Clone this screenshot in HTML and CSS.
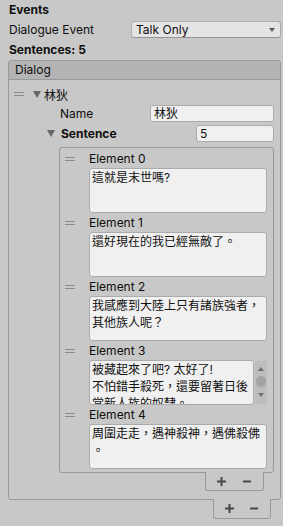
FILE: index.html
```html
<!DOCTYPE html>
<html lang="zh-Hant">
<head>
    <meta charset="UTF-8">
    <meta name="viewport" content="width=device-width, initial-scale=1.0">
    <title>Dialogue Inspector</title>
    <link rel="stylesheet" href="styles.css">
</head>
<body>

<!-- Events -->
<div class="title">Events</div>
<div class="event-row">
    <span class="event-label">Dialogue Event</span>
    <div class="dropdown">
        <span>Talk Only</span>
        <span class="caret"></span>
    </div>
</div>
<div class="title count">Sentences: 5</div>

<!-- Dialog list -->
<div class="box">
    <div class="box-head">Dialog</div>
    <div class="box-body">
        <div class="item-head">
            <span class="handle"></span>
            <span class="tri"></span>
            <span class="item-name">林狄</span>
        </div>

        <div class="prop name-row">
            <span class="prop-label">Name</span>
            <div class="field">林狄</div>
        </div>

        <div class="prop size-row">
            <span class="tri"></span>
            <span class="prop-label bold">Sentence</span>
            <div class="field size">5</div>
        </div>

        <div class="list">
            <div class="element">
                <div class="el-head"><span class="handle"></span><span>Element 0</span></div>
                <div class="text">這就是末世嗎?</div>
            </div>
            <div class="element">
                <div class="el-head"><span class="handle"></span><span>Element 1</span></div>
                <div class="text">還好現在的我已經無敵了。</div>
            </div>
            <div class="element">
                <div class="el-head"><span class="handle"></span><span>Element 2</span></div>
                <div class="text">我感應到大陸上只有諸族強者，<br>其他族人呢？</div>
            </div>
            <div class="element">
                <div class="el-head"><span class="handle"></span><span>Element 3</span></div>
                <div class="text-wrap">
                    <div class="text">被藏起來了吧? 太好了!<br>不怕錯手殺死，還要留著日後<br>當新人族的奴隸。</div>
                    <div class="scrollbar">
                        <span class="arrow up"></span>
                        <span class="thumb"></span>
                        <span class="arrow down"></span>
                    </div>
                </div>
            </div>
            <div class="element">
                <div class="el-head"><span class="handle"></span><span>Element 4</span></div>
                <div class="text">周圍走走，遇神殺神，遇佛殺佛<br>。</div>
            </div>
        </div>

        <div class="tab inner-tab">
            <span class="tab-btn">
                <svg width="9" height="9" viewBox="0 0 9 9"><path d="M4.5 0v9M0 4.5h9" stroke="#484848" stroke-width="2"/></svg>
            </span>
            <span class="tab-btn">
                <svg width="8" height="9" viewBox="0 0 8 9"><path d="M0 4.5h8" stroke="#484848" stroke-width="2"/></svg>
            </span>
        </div>
    </div>
</div>

<div class="tab outer-tab">
    <span class="tab-btn">
        <svg width="9" height="9" viewBox="0 0 9 9"><path d="M4.5 0v9M0 4.5h9" stroke="#484848" stroke-width="2"/></svg>
    </span>
    <span class="tab-btn">
        <svg width="8" height="9" viewBox="0 0 8 9"><path d="M0 4.5h8" stroke="#484848" stroke-width="2"/></svg>
    </span>
</div>

</body>
</html>
```

FILE: styles.css
```css
/* ===== Page ===== */
body {
    margin: 0;
    width: 283px;
    height: 526px;
    overflow: hidden;
    background: #c8c8c8;
    font-family: "Inter", "Noto Sans CJK TC", sans-serif;
    font-size: 12px;
    color: #0f0f0f;
}

/* ===== Events header ===== */
.title {
    padding-left: 9px;
    font-weight: bold;
    line-height: 20px;
}

.title.count {
    margin-top: 2px;
}

.event-row {
    display: flex;
    align-items: center;
    height: 17px;
    margin-top: 1px;
    padding: 0 2px 0 9px;
}

.event-label {
    width: 122px;
}

.dropdown {
    flex: 1;
    display: flex;
    align-items: center;
    justify-content: space-between;
    box-sizing: border-box;
    height: 17px;
    padding: 0 5px 0 4px;
    background: #e4e4e4;
    border: 1px solid #acacac;
    border-bottom-color: #949494;
    border-radius: 3px;
}

.caret {
    width: 0;
    height: 0;
    border-left: 3px solid transparent;
    border-right: 3px solid transparent;
    border-top: 4px solid #5a5a5a;
}

/* ===== Dialog box ===== */
.box {
    margin: 0 2px 0 8px;
    border: 1px solid #999;
    border-radius: 3px;
}

.box-head {
    height: 18px;
    line-height: 18px;
    padding-left: 6px;
    background: #b4b4b4;
    border-bottom: 1px solid #999;
    border-radius: 2px 2px 0 0;
}

.box-body {
    display: flex;
    flex-direction: column;
    padding: 5px 6px 8px 5px;
}

.handle {
    flex: none;
    width: 10px;
    height: 2px;
    border-top: 1px solid #8c8c8c;
    border-bottom: 1px solid #8c8c8c;
}

.tri {
    flex: none;
    width: 0;
    height: 0;
    border-left: 4px solid transparent;
    border-right: 4px solid transparent;
    border-top: 7px solid #666;
}

.item-head {
    display: flex;
    align-items: center;
    height: 18px;
}

.item-head .tri {
    margin-left: 9px;
}

.item-name {
    margin-left: 3px;
}

/* ===== Properties ===== */
.prop {
    display: flex;
    align-items: center;
    height: 17px;
}

.name-row {
    margin-top: 2px;
    padding-left: 46px;
}

.name-row .prop-label {
    width: 90px;
}

.size-row {
    margin-top: 3px;
    padding-left: 33px;
}

.size-row .prop-label {
    margin-left: 6px;
    flex: 1;
}

.bold {
    font-weight: bold;
}

.field {
    flex: none;
    box-sizing: border-box;
    width: 124px;
    height: 17px;
    line-height: 15px;
    padding: 0 3px;
    background: #f0f0f0;
    border: 1px solid #ababab;
    border-radius: 3px;
}

.field.size {
    width: 78px;
}

/* ===== Sentence list ===== */
.list {
    margin: 5px 0 0 45px;
    padding: 1px 6px 3px 5px;
    border: 1px solid #999;
    border-radius: 3px;
}

.el-head {
    display: flex;
    align-items: center;
    height: 19px;
}

.el-head .handle {
    margin-right: 14px;
}

.text {
    box-sizing: border-box;
    height: 45px;
    margin-left: 24px;
    padding: 0 2px;
    overflow: hidden;
    white-space: nowrap;
    line-height: 17px;
    background: #f0f0f0;
    border: 1px solid #ababab;
    border-radius: 3px;
    color: #111;
}

.text-wrap {
    display: flex;
    margin-left: 24px;
}

.text-wrap .text {
    flex: 1;
    margin-left: 0;
}

.scrollbar {
    flex: none;
    display: flex;
    flex-direction: column;
    align-items: center;
    width: 12px;
    margin: 1px 0 1px 1px;
    padding-top: 6px;
    background: #bdbdbd;
}

.arrow {
    width: 0;
    height: 0;
    border-left: 3px solid transparent;
    border-right: 3px solid transparent;
}

.arrow.up {
    border-bottom: 4px solid #6e6e6e;
}

.arrow.down {
    border-top: 4px solid #6e6e6e;
}

.thumb {
    width: 10px;
    height: 11px;
    margin: 5px 0 6px;
    border-radius: 5px;
    background: #a3a3a3;
}

/* ===== +/- tabs ===== */
.tab {
    align-self: flex-end;
    display: flex;
    box-sizing: border-box;
    height: 19px;
    margin-top: -1px;
    padding-left: 3px;
    padding-right: 4px;
    background: #c8c8c8;
    border: 1px solid #999;
    border-top: none;
    border-radius: 0 0 3px 3px;
}

.inner-tab {
    margin-right: 10px;
}

.outer-tab {
    width: 58px;
    height: 20px;
    margin: -1px 0 0 213px;
}

.tab-btn {
    display: flex;
    align-items: center;
    justify-content: center;
    width: 25px;
}
```
